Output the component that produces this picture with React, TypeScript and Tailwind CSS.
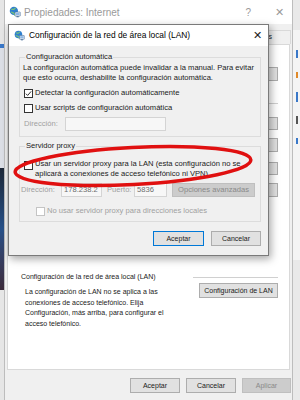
import type { ReactNode } from 'react';

const FONT = "font-['Liberation_Sans','DejaVu_Sans',Arial,sans-serif]";

function NetIcon({ size = 11 }: { size?: number }) {
  return (
    <svg width={size} height={size} viewBox="0 0 16 16">
      <circle cx="6.5" cy="6.5" r="5.5" fill="#2f7fd0" />
      <path d="M3 4.5c1.5-.5 2.5.5 3.5 0s1-2 2.5-1.5M2.5 8c1.5 0 2 1 3.5 1.5s2 2 1 3" stroke="#7cc576" strokeWidth="1.6" fill="none" />
      <rect x="8" y="8" width="7" height="5.5" rx="0.5" fill="#e8eef5" stroke="#4a6f98" strokeWidth="0.8" />
      <rect x="9" y="9" width="5" height="3" fill="#8fb8e6" />
      <rect x="10" y="13.5" width="3" height="1.5" fill="#4a6f98" />
    </svg>
  );
}

function Check({ checked = false, disabled = false }: { checked?: boolean; disabled?: boolean }) {
  return (
    <span
      className={`flex w-[9px] h-[9px] shrink-0 items-center justify-center border bg-white ${
        disabled ? 'border-[#c4c4c4]' : 'border-[#333333]'
      }`}
    >
      {checked && (
        <svg width="7" height="7" viewBox="0 0 8 8">
          <path d="M1 4.2 3 6.2 7 1.6" stroke="#222" strokeWidth="1.1" fill="none" />
        </svg>
      )}
    </span>
  );
}

function Btn({ children, w, variant = 'normal' }: { children: ReactNode; w: string; variant?: 'normal' | 'default' | 'disabled' }) {
  const styles = {
    normal: 'border-[#adadad] bg-[#e1e1e1] text-[#1a1a1a]',
    default: 'border-[#0078d7] bg-[#e1e1e1] text-[#1a1a1a]',
    disabled: 'border-[#bfbfbf] bg-[#cccccc] text-[#8a8a8a]',
  }[variant];
  return (
    <div className={`${w} h-[15px] shrink-0 border ${styles} flex items-center justify-center text-[7px] leading-none`}>
      {children}
    </div>
  );
}

function Group({ title, className, children }: { title: string; className: string; children: ReactNode }) {
  return (
    <fieldset className={`border border-[#dcdcdc] ${className}`}>
      <legend className="ml-[2px] px-[1px] leading-[10px] text-[#1a1a1a]">{title}</legend>
      {children}
    </fieldset>
  );
}

function LanDialog() {
  return (
    <div className="absolute left-[8px] top-[24px] w-[261px] h-[232px] border border-[#7a7a7a] bg-[#f0f0f0] shadow-[2px_3px_8px_rgba(0,0,0,0.35)] flex flex-col">
      {/* title bar */}
      <div className="h-[21px] shrink-0 bg-white flex items-center pl-[5px] pr-[6px]">
        <NetIcon size={11} />
        <span className="ml-[4px] text-[8.4px] text-black whitespace-nowrap">Configuración de la red de área local (LAN)</span>
        <span className="ml-auto text-[11px] leading-none text-[#222] font-light">✕</span>
      </div>

      {/* body */}
      <div className="flex flex-col pt-[6px] pl-[10px] pr-[7px] text-[7.6px] leading-[10px] text-[#1a1a1a] whitespace-nowrap">
        <Group title="Configuración automática" className="pl-[3px] pt-[1px] pb-[5px]">
          <p>
            La configuración automática puede invalidar a la manual. Para evitar
            <br />
            que esto ocurra, deshabilite la configuración automática.
          </p>
          <div className="mt-[5px] flex items-center gap-[2px] pl-[1px]">
            <Check checked />
            <span>Detectar la configuración automáticamente</span>
          </div>
          <div className="mt-[5px] flex items-center gap-[2px] pl-[1px]">
            <Check />
            <span>Usar scripts de configuración automática</span>
          </div>
          <div className="mt-[4px] flex items-center pl-[1px]">
            <span className="w-[41px] text-[#a0a0a0]">Dirección:</span>
            <div className="w-[101px] h-[14px] border border-[#d4d4d4] bg-[#f7f7f7]" />
          </div>
        </Group>

        <Group title="Servidor proxy" className="mt-[4px] pl-[3px] pb-[5px] pt-[8px]">
          <div className="flex items-start gap-[2px] pl-[1px]">
            <span className="mt-[2px]">
              <Check />
            </span>
            <p className="leading-[9.5px]">
              Usar un servidor proxy para la LAN (esta configuración no se
              <br />
              aplicará a conexiones de acceso telefónico ni VPN).
            </p>
          </div>
          <div className="mt-[5px] flex items-center text-[#a0a0a0]">
            <span className="w-[40px] -ml-[2px]">Dirección:</span>
            <div className="w-[41px] h-[14px] border border-[#d4d4d4] bg-[#f7f7f7] flex items-center pl-[2px] overflow-hidden text-[#6d6d6d]">
              178.238.2
            </div>
            <span className="ml-[5px] w-[27px]">Puerto:</span>
            <div className="w-[33px] h-[14px] border border-[#d4d4d4] bg-[#f7f7f7] flex items-center pl-[2px] text-[#6d6d6d]">
              5836
            </div>
            <div className="ml-[5px] w-[83px] h-[14px] border border-[#bfbfbf] bg-[#cccccc] flex items-center justify-center text-[#8a8a8a]">
              Opciones avanzadas
            </div>
          </div>
          <div className="mt-[9px] flex items-center gap-[2px] pl-[13px] text-[#a0a0a0]">
            <Check disabled />
            <span>No usar servidor proxy para direcciones locales</span>
          </div>
        </Group>

        <div className="mt-[9px] flex justify-end gap-[7px]">
          <Btn w="w-[51px]" variant="default">Aceptar</Btn>
          <Btn w="w-[50px]">Cancelar</Btn>
        </div>
      </div>

      {/* red marker */}
      <svg className="absolute left-[2px] top-[119px]" width="246" height="46" viewBox="0 0 246 46">
        <ellipse cx="122" cy="22" rx="118" ry="18.5" transform="rotate(-3 122 22)" fill="none" stroke="#e01010" strokeWidth="3.5" />
      </svg>
    </div>
  );
}

export default function App() {
  return (
    <div className={`relative w-[300px] h-[400px] overflow-hidden flex bg-[#f0f0f0] ${FONT}`}>
      {/* desktop peeking on the left */}
      <div className="w-[4px] flex flex-col">
        <div className="h-[44px] bg-[#e6e6e6]" />
        <div className="h-[4px] bg-[#3a78c8]" />
        <div className="h-[120px] bg-[#dcdfe6]" />
        <div className="h-[122px] bg-gradient-to-b from-[#1d2838] via-[#27518a] to-[#3b2a3a]" />
        <div className="flex-1 bg-[#e6e6e6]" />
      </div>

      {/* Propiedades: Internet */}
      <div className="w-[289px] h-[400px] flex flex-col border-x border-[#bdbdbd] bg-[#f0f0f0]">
        <div className="h-[24px] shrink-0 bg-white flex items-center pl-[4px] pr-[8px]">
          <NetIcon size={12} />
          <span className="ml-[3px] text-[10px] text-[#9a9a9a]">Propiedades: Internet</span>
          <span className="ml-auto text-[10px] text-[#9a9a9a]">?</span>
          <span className="ml-[24px] text-[11px] leading-none text-[#9a9a9a] font-light">✕</span>
        </div>

        {/* tabs (mostly hidden behind the LAN dialog) */}
        <div className="h-[20px] shrink-0 flex items-end pl-[2px] pr-[1px]">
          <div className="flex-1" />
          <div className="h-[14px] w-[30px] border border-b-0 border-[#d9d9d9] bg-[#f0f0f0] flex items-center justify-end pr-[18px] text-[7px] text-[#1a1a1a]">
            s
          </div>
        </div>

        {/* tab page */}
        <div className="ml-[2px] w-[283px] flex-1 border border-[#d9d9d9] bg-white flex flex-col text-[7px] leading-[10px] text-[#1a1a1a]">
          <div className="flex flex-col items-end pr-[11px]">
            <div className="mt-[22px] w-[79px] h-[14px] border border-[#adadad] bg-[#e1e1e1]" />
            <div className="mt-[22px] w-[150px] h-px bg-[#d0d0d0]" />
            <div className="mt-[13px] w-[79px] h-[13px] border border-[#adadad] bg-[#e1e1e1]" />
            <div className="mt-[8px] w-[79px] h-[14px] border border-[#adadad] bg-[#e1e1e1]" />
            <div className="mt-[10px] w-[79px] h-[13px] border border-[#adadad] bg-[#e1e1e1]" />
            <div className="mt-[8px] w-[79px] h-[14px] border border-[#adadad] bg-[#e1e1e1]" />
          </div>

          <div className="mt-auto flex items-center justify-between pl-[13px] pr-[11px]">
            <span>Configuración de la red de área local (LAN)</span>
            <div className="w-[85px] h-px bg-[#d0d0d0]" />
          </div>
          <div className="mt-[1px] mb-[40px] flex justify-between pl-[17px] pr-[11px]">
            <p className="pt-[4px] leading-[10.5px]">
              La configuración de LAN no se aplica a las
              <br />
              conexiones de acceso telefónico. Elija
              <br />
              Configuración, más arriba, para configurar el
              <br />
              acceso telefónico.
            </p>
            <div className="w-[79px] h-[15px] border border-[#adadad] bg-[#e1e1e1] flex items-center justify-center">
              Configuración de LAN
            </div>
          </div>
        </div>

        {/* bottom buttons */}
        <div className="h-[30px] shrink-0 pt-[8px] flex justify-end gap-[6px] pr-[1px]">
          <Btn w="w-[50px]">Aceptar</Btn>
          <Btn w="w-[50px]">Cancelar</Btn>
          <Btn w="w-[49px]" variant="disabled">Aplicar</Btn>
        </div>
      </div>

      {/* desktop peeking on the right */}
      <div className="flex-1 flex flex-col">
        <div className="h-[30px] bg-[#e9e9e9]" />
        <div className="h-[230px] flex bg-[#f4f4f4]">
          <div className="w-[3px]" />
          <div className="w-[2px] flex flex-col gap-[14px] pt-[20px]">
            <div className="h-[8px] bg-[#3a78c8]" />
            <div className="h-[6px] bg-[#e08a2a]" />
            <div className="h-[10px] bg-[#3a78c8]" />
            <div className="h-[8px] bg-[#555]" />
            <div className="h-[6px] bg-[#3a78c8]" />
          </div>
        </div>
        <div className="flex-1 bg-[#e9e9e9]" />
      </div>

      <LanDialog />
    </div>
  );
}
